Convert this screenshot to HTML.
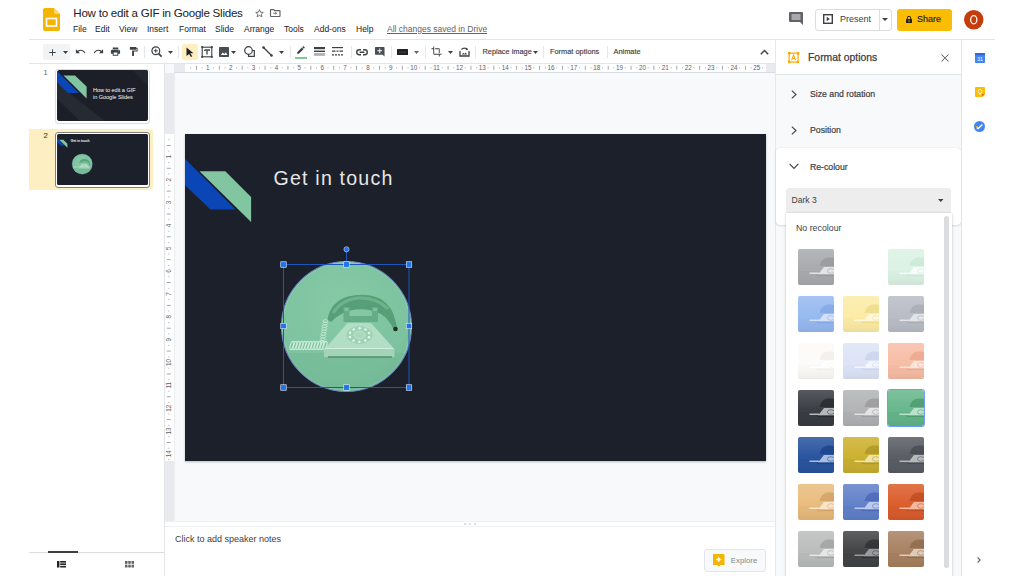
<!DOCTYPE html>
<html><head><meta charset="utf-8">
<style>
*{box-sizing:border-box;margin:0;padding:0}
html,body{width:1024px;height:576px;overflow:hidden;background:#fff;font-family:"Liberation Sans",sans-serif;color:#3c4043}
.a{position:absolute}
.t{position:absolute;white-space:nowrap;line-height:1}
svg{position:absolute;overflow:visible}
</style></head><body>

<!-- ============ HEADER ============ -->
<svg class="a" style="left:43px;top:8px" width="17" height="23" viewBox="0 0 17 23">
  <path d="M2 0H11L17 6V21A2 2 0 0 1 15 23H2A2 2 0 0 1 0 21V2A2 2 0 0 1 2 0Z" fill="#f4b400"/>
  <path d="M11 0L17 6H13A2 2 0 0 1 11 4Z" fill="#fad87a"/>
  <rect x="3.5" y="10.5" width="10" height="7.5" fill="none" stroke="#fff" stroke-width="1.6"/>
</svg>
<div class="t" style="left:73.3px;top:7.4px;font-size:11.6px;letter-spacing:-0.25px;color:#202124">How to edit a GIF in Google Slides</div>
<!-- star -->
<svg style="left:254.8px;top:9.3px" width="9" height="8.5" viewBox="0 0 24 23"><path d="M12 1.8l2.9 6.9 7.3.6-5.5 4.8 1.7 7.2L12 17.4l-6.4 3.9 1.7-7.2-5.5-4.8 7.3-.6z" fill="none" stroke="#5f6368" stroke-width="2.4" stroke-linejoin="round"/></svg>
<!-- folder -->
<svg style="left:270.3px;top:9.2px" width="10.5" height="8" viewBox="0 0 21 16"><path d="M2 1.2H7.5L9.5 3.2H19A1 1 0 0 1 20 4.2V14A1 1 0 0 1 19 15H2A1 1 0 0 1 1 14V2.2A1 1 0 0 1 2 1.2Z" fill="none" stroke="#5f6368" stroke-width="2.3"/><path d="M6.5 8.5H13M10.5 6L13 8.5L10.5 11" fill="none" stroke="#5f6368" stroke-width="1.8"/></svg>

<div class="t" style="top:25px;font-size:8.5px;color:#202124">
<span class="t" style="left:73px">File</span><span class="t" style="left:95px">Edit</span><span class="t" style="left:119px">View</span><span class="t" style="left:147px">Insert</span><span class="t" style="left:179px">Format</span><span class="t" style="left:215px">Slide</span><span class="t" style="left:244px">Arrange</span><span class="t" style="left:284px">Tools</span><span class="t" style="left:314px">Add-ons</span><span class="t" style="left:356px">Help</span>
<span class="t" style="left:387px;color:#5f6368;text-decoration:underline">All changes saved in Drive</span>
</div>

<!-- right header -->
<svg style="left:789px;top:12px" width="14" height="13" viewBox="0 0 14 13"><path d="M1 0H13A1 1 0 0 1 14 1V13L11 10H1A1 1 0 0 1 0 9V1A1 1 0 0 1 1 0Z" fill="#5f6368"/><path d="M2.5 3H11.5M2.5 5H11.5M2.5 7H11.5" stroke="#fff" stroke-width="0.9"/></svg>
<div class="a" style="left:815px;top:8.5px;width:77px;height:22px;border:1px solid #dadce0;border-radius:3px"></div>
<div class="a" style="left:879px;top:9px;width:1px;height:21px;background:#dadce0"></div>
<svg style="left:823px;top:14px" width="10" height="10" viewBox="0 0 10 10"><rect x="0.7" y="0.7" width="8.6" height="8.6" fill="none" stroke="#3c4043" stroke-width="1.4"/><path d="M3.7 2.8L6.8 5L3.7 7.2Z" fill="#3c4043"/></svg>
<div class="t" style="left:840px;top:15px;font-size:9px;color:#3c4043">Present</div>
<svg style="left:882px;top:18px" width="6" height="3" viewBox="0 0 6 3"><path d="M0 0H6L3 3Z" fill="#3c4043"/></svg>
<div class="a" style="left:897px;top:8.5px;width:54.5px;height:22px;background:#fbbc04;border-radius:3px"></div>
<svg style="left:906px;top:15.8px" width="6" height="7" viewBox="0 0 6 7"><path d="M1.3 3.2V2A1.7 1.7 0 0 1 4.7 2V3.2" fill="none" stroke="#202124" stroke-width="1"/><rect x="0" y="3" width="6" height="4" rx="0.6" fill="#202124"/><circle cx="3" cy="5" r="0.7" fill="#fbbc04"/></svg>
<div class="t" style="left:917px;top:15px;font-size:9px;color:#202124;-webkit-text-stroke:0.15px #202124">Share</div>
<svg style="left:964px;top:9.9px" width="19.5" height="19.5" viewBox="0 0 19.5 19.5"><circle cx="9.75" cy="9.75" r="9.75" fill="#c53d0d"/><ellipse cx="9.75" cy="9.75" rx="3.1" ry="4.1" fill="none" stroke="#fff" stroke-width="1.25"/></svg>

<!-- header bottom line -->
<div class="a" style="left:29px;top:39px;width:966px;height:1px;background:#e3e5e8"></div>


<!-- ============ TOOLBAR ============ -->
<div class="a" style="left:29px;top:63px;width:746px;height:1px;background:#e3e5e8"></div>
<div class="a" style="left:43px;top:44px;width:27px;height:16px;background:#f1f3f4;border-radius:2px"></div>
<svg style="left:46.5px;top:46.5px" width="11" height="11" viewBox="0 0 24 24"><path d="M19 13h-6v6h-2v-6H5v-2h6V5h2v6h6v2z" fill="#3c4043"/></svg>
<svg style="left:62.5px;top:51px" width="5" height="3" viewBox="0 0 5 3"><path d="M0 0H5L2.5 3Z" fill="#3c4043"/></svg>
<svg style="left:74.5px;top:46px" width="11" height="11" viewBox="0 0 24 24"><path d="M12.5 8c-2.65 0-5.05.99-6.9 2.6L2 7v9h9l-3.62-3.62c1.39-1.16 3.16-1.88 5.12-1.88 3.54 0 6.55 2.31 7.6 5.5l2.370-.78C21.08 11.03 17.15 8 12.5 8z" fill="#3c4043"/></svg>
<svg style="left:92.5px;top:46px" width="11" height="11" viewBox="0 0 24 24"><path d="M18.4 10.6C16.55 8.99 14.15 8 11.5 8c-4.650 0-8.58 3.03-9.96 7.22L3.9 16c1.05-3.19 4.05-5.5 7.6-5.5 1.95 0 3.73.72 5.12 1.88L13 16h9V7l-3.6 3.6z" fill="#3c4043"/></svg>
<svg style="left:109.5px;top:46px" width="11" height="11" viewBox="0 0 24 24"><path d="M19 8H5c-1.66 0-3 1.34-3 3v6h4v4h12v-4h4v-6c0-1.66-1.34-3-3-3zm-3 11H8v-5h8v5zm3-7c-.55 0-1-.45-1-1s.45-1 1-1 1 .45 1 1-.45 1-1 1zm-1-9H6v4h12V3z" fill="#3c4043"/></svg>
<svg style="left:127.5px;top:46px" width="11" height="11" viewBox="0 0 24 24"><path d="M18 4V3c0-.55-.45-1-1-1H5c-.55 0-1 .45-1 1v4c0 .55.45 1 1 1h12c.55 0 1-.45 1-1V6h1v4H9v11c0 .55.45 1 1 1h2c.55 0 1-.45 1-1v-9h8V4h-3z" fill="#3c4043"/></svg>
<div class="a" style="left:144px;top:46px;width:1px;height:12px;background:#e5e7ea"></div>
<svg style="left:150px;top:45px" width="13" height="13" viewBox="0 0 13 13"><circle cx="5.8" cy="5.8" r="3.9" fill="none" stroke="#3c4043" stroke-width="1.2"/><path d="M8.6 8.6L11.6 11.6" stroke="#3c4043" stroke-width="1.6"/><path d="M5.8 3.8V7.8M3.8 5.8H7.8" stroke="#3c4043" stroke-width="1"/></svg>
<svg style="left:167.5px;top:51px" width="5" height="3" viewBox="0 0 5 3"><path d="M0 0H5L2.5 3Z" fill="#3c4043"/></svg>
<div class="a" style="left:178px;top:46px;width:1px;height:12px;background:#e5e7ea"></div>
<div class="a" style="left:181.5px;top:43.5px;width:16px;height:16px;background:#feefc3;border-radius:2px"></div>
<svg style="left:185px;top:46.5px" width="10" height="10" viewBox="0 0 10 10"><path d="M1.5 0.5L8.5 6.3H5.3L7.2 9.3L5.9 10L4.1 7L1.5 9Z" fill="#202124"/></svg>
<svg style="left:201px;top:46px" width="12" height="12" viewBox="0 0 12 12"><rect x="1.2" y="1.2" width="9.6" height="9.6" fill="none" stroke="#3c4043" stroke-width="1.1"/><circle cx="1.2" cy="1.2" r="1.1" fill="#3c4043"/><circle cx="10.8" cy="1.2" r="1.1" fill="#3c4043"/><circle cx="1.2" cy="10.8" r="1.1" fill="#3c4043"/><circle cx="10.8" cy="10.8" r="1.1" fill="#3c4043"/><path d="M3.8 3.8H8.2V5M6 3.8V8.4M3.8 3.8V5" fill="none" stroke="#3c4043" stroke-width="1.3"/></svg>
<svg style="left:219px;top:46.5px" width="10" height="10" viewBox="0 0 10 10"><rect x="0" y="0" width="10" height="10" rx="0.8" fill="#4a4e52"/><path d="M1.8 8L3.8 5.4L5.3 7.1L6.8 5.2L8.4 8Z" fill="#fff"/></svg>
<svg style="left:231.2px;top:51px" width="5" height="3" viewBox="0 0 5 3"><path d="M0 0H5L2.5 3Z" fill="#3c4043"/></svg>
<svg style="left:243.5px;top:46px" width="11" height="11" viewBox="0 0 11 11"><circle cx="4.5" cy="4.5" r="3.8" fill="none" stroke="#3c4043" stroke-width="1.2"/><path d="M4.5 8.3V10.3H10.3V4.5H8.3" fill="none" stroke="#3c4043" stroke-width="1.2"/></svg>
<svg style="left:262px;top:46px" width="11" height="11" viewBox="0 0 11 11"><path d="M1.5 1.5L9.5 9.5" stroke="#3c4043" stroke-width="1.3"/><circle cx="1.5" cy="1.5" r="1.3" fill="#3c4043"/><circle cx="9.5" cy="9.5" r="1.3" fill="#3c4043"/></svg>
<svg style="left:279px;top:51px" width="5" height="3" viewBox="0 0 5 3"><path d="M0 0H5L2.5 3Z" fill="#3c4043"/></svg>
<div class="a" style="left:289.5px;top:46px;width:1px;height:12px;background:#e5e7ea"></div>
<svg style="left:296px;top:45px" width="10" height="10" viewBox="0 0 24 24"><path d="M3 17.25V21h3.75L17.81 9.940l-3.75-3.75L3 17.25zM20.71 7.04c.39-.39.39-1.02 0-1.41l-2.34-2.34c-.39-.39-1.02-.39-1.41 0l-1.83 1.830 3.75 3.75 1.83-1.830z" fill="#3c4043"/></svg>
<div class="a" style="left:295px;top:56.5px;width:12px;height:2px;background:#81c995"></div>
<svg style="left:314px;top:47px" width="11" height="9" viewBox="0 0 11 9"><rect x="0" y="0" width="11" height="2.2" fill="#3c4043"/><rect x="0" y="3.6" width="11" height="1.4" fill="#3c4043"/><rect x="0" y="6.6" width="11" height="0.8" fill="#3c4043"/><rect x="0" y="8.2" width="11" height="0.7" fill="#9aa0a6"/></svg>
<svg style="left:332px;top:47px" width="11" height="9" viewBox="0 0 11 9"><rect x="0" y="0" width="11" height="1.2" fill="#3c4043"/><path d="M0 4.2H3.5M4.5 4.2H6.5M7.5 4.2H11" stroke="#3c4043" stroke-width="1.2"/><path d="M0 7.8H2M3 7.8H5M6 7.8H8M9 7.8H11" stroke="#3c4043" stroke-width="1.2"/></svg>
<div class="a" style="left:350.5px;top:46px;width:1px;height:12px;background:#e5e7ea"></div>
<svg style="left:356px;top:48.5px" width="12" height="6.5" viewBox="0 0 12 6.5"><path d="M5 0.8H3.2A2.45 2.45 0 0 0 3.2 5.7H5M7 0.8H8.8A2.45 2.45 0 0 1 8.8 5.7H7M3.6 3.25H8.4" fill="none" stroke="#3c4043" stroke-width="1.4"/></svg>
<svg style="left:373.5px;top:46px" width="11.5" height="11.5" viewBox="0 0 24 24"><path d="M21.99 4c0-1.1-.89-2-1.99-2H4c-1.1 0-2 .9-2 2v12c0 1.1.9 2 2 2h14l4 4-.01-18zM17 11h-4v4h-2v-4H7V9h4V5h2v4h4v2z" fill="#4a4d51"/></svg>
<div class="a" style="left:390.5px;top:46px;width:1px;height:12px;background:#e5e7ea"></div>
<svg style="left:397px;top:49px" width="11" height="6" viewBox="0 0 11 6"><rect x="0" y="0" width="11" height="6" rx="0.5" fill="#202124"/><path d="M2 3.2H9" stroke="#5f6368" stroke-width="0.8" stroke-dasharray="1 0.6"/></svg>
<svg style="left:413.5px;top:51px" width="5" height="3" viewBox="0 0 5 3"><path d="M0 0H5L2.5 3Z" fill="#5f6368"/></svg>
<div class="a" style="left:424.5px;top:46px;width:1px;height:12px;background:#e5e7ea"></div>
<svg style="left:430.5px;top:46px" width="11" height="11" viewBox="0 0 24 24"><path d="M17 15h2V7c0-1.1-.9-2-2-2H9v2h8v8zM7 17V1H5v4H1v2h4v10c0 1.1.9 2 2 2h10v4h2v-4h4v-2H7z" fill="#3c4043"/></svg>
<svg style="left:447.5px;top:51px" width="5" height="3" viewBox="0 0 5 3"><path d="M0 0H5L2.5 3Z" fill="#3c4043"/></svg>
<svg style="left:458.5px;top:46px" width="11" height="11" viewBox="0 0 11 11"><path d="M1 5V10H10V5" fill="none" stroke="#3c4043" stroke-width="1.3"/><path d="M2.5 3.5A4 4 0 0 1 8.5 3.5" fill="none" stroke="#3c4043" stroke-width="1.2"/><path d="M7.5 1.5L9 3.8L6.6 4.2Z" fill="#3c4043"/><path d="M2.8 8.6L4.3 6.8L5.4 7.9L6.6 6.4L8.2 8.6Z" fill="#3c4043"/></svg>
<div class="a" style="left:475px;top:46px;width:1px;height:12px;background:#e5e7ea"></div>
<div class="t" style="left:482.5px;top:47.5px;font-size:7.4px;color:#3c4043;-webkit-text-stroke:0.15px #3c4043">Replace image</div>
<svg style="left:533px;top:51px" width="5" height="3" viewBox="0 0 5 3"><path d="M0 0H5L2.5 3Z" fill="#3c4043"/></svg>
<div class="a" style="left:543px;top:46px;width:1px;height:12px;background:#e5e7ea"></div>
<div class="t" style="left:550px;top:47.5px;font-size:7.4px;color:#3c4043;-webkit-text-stroke:0.15px #3c4043">Format options</div>
<div class="a" style="left:607px;top:46px;width:1px;height:12px;background:#e5e7ea"></div>
<div class="t" style="left:613.5px;top:47.5px;font-size:7.4px;color:#3c4043;-webkit-text-stroke:0.15px #3c4043">Animate</div>
<svg style="left:760px;top:48.5px" width="9" height="6" viewBox="0 0 9 6"><path d="M0.8 5.2L4.5 1.5L8.2 5.2" fill="none" stroke="#3c4043" stroke-width="1.4"/></svg>


<!-- ============ LEFT FILMSTRIP ============ -->
<div class="a" style="left:164px;top:64px;width:1px;height:512px;background:#e3e5e8"></div>
<div class="t" style="left:43.5px;top:69px;font-size:7.5px;color:#5f6368">1</div>
<div class="a" style="left:55px;top:68.5px;width:94.5px;height:55px;border:1px solid #dadce0;border-radius:3px;background:#fff"></div>
<svg style="left:57px;top:70.4px;overflow:hidden;border-radius:2px" width="91" height="51.1" viewBox="0 0 91 51.1">
  <rect width="91" height="51.1" rx="1.8" fill="#1c1f28"/>
  <path d="M0 12.9L48 51.1H23L0 29Z" fill="#262a32"/>
  <path d="M74.8 0H91V16Z" fill="#22262f"/>
  <path d="M0 1.1L22 23.1H10.8L0 12.4Z" fill="#0a46b5"/>
  <path d="M6.5 5.4H18L29.6 16.6V28.5Z" fill="#81c5a1"/>
  <text x="36" y="22" font-family="Liberation Sans" font-size="5.6" letter-spacing="-0.05" fill="#f4f4f4">How to edit a GIF</text>
  <text x="36" y="28.7" font-family="Liberation Sans" font-size="5.6" letter-spacing="-0.05" fill="#f4f4f4">in Google Slides</text>
</svg>
<div class="a" style="left:29px;top:128.5px;width:124px;height:61.5px;background:#feefc3;border-radius:0 3px 3px 0"></div>
<div class="t" style="left:43.5px;top:131.5px;font-size:7.8px;color:#3c4043;-webkit-text-stroke:0.1px #3c4043">2</div>
<div class="a" style="left:54.5px;top:131.5px;width:95px;height:56px;border:1.2px solid #7c7f84;border-radius:3px;background:#fff"></div>
<svg style="left:57px;top:133.9px;overflow:hidden;border-radius:1.5px" width="91" height="51.2" viewBox="0 0 581 327">
  <rect width="581" height="327" fill="#1c202b"/>
  <path d="M0 24.75L50.5 75.5H25.5L0 51.3Z" fill="#0a46b5"/>
  <path d="M14.5 37.25H40.3L66.1 63V88Z" fill="#81c5a1"/>
  <text x="88" y="48" font-family="Liberation Sans" font-size="20" letter-spacing="1" fill="#f2f2f2" stroke="#f2f2f2" stroke-width="0.7">Get in touch</text>
  <use href="#phoneg" transform="translate(95.5 126.5)"/>
</svg>
<div class="a" style="left:29px;top:552px;width:135px;height:1px;background:#dadce0"></div>
<div class="a" style="left:48px;top:551px;width:29.5px;height:2px;background:#3c4043"></div>
<svg style="left:57px;top:561px" width="9" height="6.5" viewBox="0 0 9 6.5"><rect x="0" y="0" width="2.4" height="6.5" fill="#202124"/><rect x="3.2" y="0" width="5.8" height="1.6" fill="#202124"/><rect x="3.2" y="2.4" width="5.8" height="1.6" fill="#202124"/><rect x="3.2" y="4.9" width="5.8" height="1.6" fill="#202124"/></svg>
<svg style="left:124.5px;top:561px" width="9" height="6.5" viewBox="0 0 9 6.5"><g fill="#5f6368"><rect x="0" y="0" width="2.5" height="2.8"/><rect x="3.25" y="0" width="2.5" height="2.8"/><rect x="6.5" y="0" width="2.5" height="2.8"/><rect x="0" y="3.7" width="2.5" height="2.8"/><rect x="3.25" y="3.7" width="2.5" height="2.8"/><rect x="6.5" y="3.7" width="2.5" height="2.8"/></g></svg>

<!-- ============ CANVAS ============ -->
<div class="a" style="left:165px;top:72px;width:610px;height:449.5px;background:#f8f9fa"></div>
<div class="a" style="left:165px;top:63.5px;width:610px;height:9px;background:#fff;border-bottom:1px solid #dadce0"></div>
<div class="a" style="left:165px;top:63.5px;width:9px;height:9px;background:#f8f9fa"></div>
<div class="a" style="left:174px;top:63.5px;width:11px;height:8.5px;background:#e8eaed"></div>
<div class="a" style="left:765.5px;top:63.5px;width:9.5px;height:8.5px;background:#e8eaed"></div>
<div class="a" style="left:165px;top:72.5px;width:9px;height:449px;background:#e8eaed"></div>
<div class="a" style="left:165px;top:134px;width:9px;height:326.5px;background:#fff"></div>
<div class="a" style="left:174px;top:72.5px;width:1px;height:449px;background:#eceef0"></div>
<svg style="left:0;top:63px" width="1024" height="10" font-family="Liberation Sans" font-size="6.3" fill="#5f6368"><rect x="190.27" y="4.3" width="0.9" height="1" fill="#9aa0a6"/><rect x="195.99" y="2.8" width="0.9" height="4" fill="#9aa0a6"/><rect x="201.71" y="4.3" width="0.9" height="1" fill="#9aa0a6"/><text x="207.87" y="7.3" text-anchor="middle">1</text><rect x="213.14" y="4.3" width="0.9" height="1" fill="#9aa0a6"/><rect x="218.86" y="2.8" width="0.9" height="4" fill="#9aa0a6"/><rect x="224.58" y="4.3" width="0.9" height="1" fill="#9aa0a6"/><text x="230.75" y="7.3" text-anchor="middle">2</text><rect x="236.02" y="4.3" width="0.9" height="1" fill="#9aa0a6"/><rect x="241.74" y="2.8" width="0.9" height="4" fill="#9aa0a6"/><rect x="247.45" y="4.3" width="0.9" height="1" fill="#9aa0a6"/><text x="253.62" y="7.3" text-anchor="middle">3</text><rect x="258.89" y="4.3" width="0.9" height="1" fill="#9aa0a6"/><rect x="264.61" y="2.8" width="0.9" height="4" fill="#9aa0a6"/><rect x="270.33" y="4.3" width="0.9" height="1" fill="#9aa0a6"/><text x="276.50" y="7.3" text-anchor="middle">4</text><rect x="281.76" y="4.3" width="0.9" height="1" fill="#9aa0a6"/><rect x="287.48" y="2.8" width="0.9" height="4" fill="#9aa0a6"/><rect x="293.20" y="4.3" width="0.9" height="1" fill="#9aa0a6"/><text x="299.37" y="7.3" text-anchor="middle">5</text><rect x="304.64" y="4.3" width="0.9" height="1" fill="#9aa0a6"/><rect x="310.36" y="2.8" width="0.9" height="4" fill="#9aa0a6"/><rect x="316.08" y="4.3" width="0.9" height="1" fill="#9aa0a6"/><text x="322.24" y="7.3" text-anchor="middle">6</text><rect x="327.51" y="4.3" width="0.9" height="1" fill="#9aa0a6"/><rect x="333.23" y="2.8" width="0.9" height="4" fill="#9aa0a6"/><rect x="338.95" y="4.3" width="0.9" height="1" fill="#9aa0a6"/><text x="345.12" y="7.3" text-anchor="middle">7</text><rect x="350.39" y="4.3" width="0.9" height="1" fill="#9aa0a6"/><rect x="356.11" y="2.8" width="0.9" height="4" fill="#9aa0a6"/><rect x="361.82" y="4.3" width="0.9" height="1" fill="#9aa0a6"/><text x="367.99" y="7.3" text-anchor="middle">8</text><rect x="373.26" y="4.3" width="0.9" height="1" fill="#9aa0a6"/><rect x="378.98" y="2.8" width="0.9" height="4" fill="#9aa0a6"/><rect x="384.70" y="4.3" width="0.9" height="1" fill="#9aa0a6"/><text x="390.87" y="7.3" text-anchor="middle">9</text><rect x="396.13" y="4.3" width="0.9" height="1" fill="#9aa0a6"/><rect x="401.85" y="2.8" width="0.9" height="4" fill="#9aa0a6"/><rect x="407.57" y="4.3" width="0.9" height="1" fill="#9aa0a6"/><text x="413.74" y="7.3" text-anchor="middle">10</text><rect x="419.01" y="4.3" width="0.9" height="1" fill="#9aa0a6"/><rect x="424.73" y="2.8" width="0.9" height="4" fill="#9aa0a6"/><rect x="430.45" y="4.3" width="0.9" height="1" fill="#9aa0a6"/><text x="436.61" y="7.3" text-anchor="middle">11</text><rect x="441.88" y="4.3" width="0.9" height="1" fill="#9aa0a6"/><rect x="447.60" y="2.8" width="0.9" height="4" fill="#9aa0a6"/><rect x="453.32" y="4.3" width="0.9" height="1" fill="#9aa0a6"/><text x="459.49" y="7.3" text-anchor="middle">12</text><rect x="464.76" y="4.3" width="0.9" height="1" fill="#9aa0a6"/><rect x="470.48" y="2.8" width="0.9" height="4" fill="#9aa0a6"/><rect x="476.19" y="4.3" width="0.9" height="1" fill="#9aa0a6"/><text x="482.36" y="7.3" text-anchor="middle">13</text><rect x="487.63" y="4.3" width="0.9" height="1" fill="#9aa0a6"/><rect x="493.35" y="2.8" width="0.9" height="4" fill="#9aa0a6"/><rect x="499.07" y="4.3" width="0.9" height="1" fill="#9aa0a6"/><text x="505.24" y="7.3" text-anchor="middle">14</text><rect x="510.50" y="4.3" width="0.9" height="1" fill="#9aa0a6"/><rect x="516.22" y="2.8" width="0.9" height="4" fill="#9aa0a6"/><rect x="521.94" y="4.3" width="0.9" height="1" fill="#9aa0a6"/><text x="528.11" y="7.3" text-anchor="middle">15</text><rect x="533.38" y="4.3" width="0.9" height="1" fill="#9aa0a6"/><rect x="539.10" y="2.8" width="0.9" height="4" fill="#9aa0a6"/><rect x="544.82" y="4.3" width="0.9" height="1" fill="#9aa0a6"/><text x="550.98" y="7.3" text-anchor="middle">16</text><rect x="556.25" y="4.3" width="0.9" height="1" fill="#9aa0a6"/><rect x="561.97" y="2.8" width="0.9" height="4" fill="#9aa0a6"/><rect x="567.69" y="4.3" width="0.9" height="1" fill="#9aa0a6"/><text x="573.86" y="7.3" text-anchor="middle">17</text><rect x="579.13" y="4.3" width="0.9" height="1" fill="#9aa0a6"/><rect x="584.85" y="2.8" width="0.9" height="4" fill="#9aa0a6"/><rect x="590.56" y="4.3" width="0.9" height="1" fill="#9aa0a6"/><text x="596.73" y="7.3" text-anchor="middle">18</text><rect x="602.00" y="4.3" width="0.9" height="1" fill="#9aa0a6"/><rect x="607.72" y="2.8" width="0.9" height="4" fill="#9aa0a6"/><rect x="613.44" y="4.3" width="0.9" height="1" fill="#9aa0a6"/><text x="619.61" y="7.3" text-anchor="middle">19</text><rect x="624.87" y="4.3" width="0.9" height="1" fill="#9aa0a6"/><rect x="630.59" y="2.8" width="0.9" height="4" fill="#9aa0a6"/><rect x="636.31" y="4.3" width="0.9" height="1" fill="#9aa0a6"/><text x="642.48" y="7.3" text-anchor="middle">20</text><rect x="647.75" y="4.3" width="0.9" height="1" fill="#9aa0a6"/><rect x="653.47" y="2.8" width="0.9" height="4" fill="#9aa0a6"/><rect x="659.19" y="4.3" width="0.9" height="1" fill="#9aa0a6"/><text x="665.35" y="7.3" text-anchor="middle">21</text><rect x="670.62" y="4.3" width="0.9" height="1" fill="#9aa0a6"/><rect x="676.34" y="2.8" width="0.9" height="4" fill="#9aa0a6"/><rect x="682.06" y="4.3" width="0.9" height="1" fill="#9aa0a6"/><text x="688.23" y="7.3" text-anchor="middle">22</text><rect x="693.50" y="4.3" width="0.9" height="1" fill="#9aa0a6"/><rect x="699.22" y="2.8" width="0.9" height="4" fill="#9aa0a6"/><rect x="704.93" y="4.3" width="0.9" height="1" fill="#9aa0a6"/><text x="711.10" y="7.3" text-anchor="middle">23</text><rect x="716.37" y="4.3" width="0.9" height="1" fill="#9aa0a6"/><rect x="722.09" y="2.8" width="0.9" height="4" fill="#9aa0a6"/><rect x="727.81" y="4.3" width="0.9" height="1" fill="#9aa0a6"/><text x="733.98" y="7.3" text-anchor="middle">24</text><rect x="739.24" y="4.3" width="0.9" height="1" fill="#9aa0a6"/><rect x="744.96" y="2.8" width="0.9" height="4" fill="#9aa0a6"/><rect x="750.68" y="4.3" width="0.9" height="1" fill="#9aa0a6"/><text x="756.85" y="7.3" text-anchor="middle">25</text><rect x="762.12" y="4.3" width="0.9" height="1" fill="#9aa0a6"/></svg>
<svg style="left:164px;top:0" width="10" height="576" font-family="Liberation Sans" font-size="6.3" fill="#5f6368"><rect x="4.3" y="139.26" width="1" height="0.9" fill="#9aa0a6"/><rect x="2.8" y="144.97" width="4" height="0.9" fill="#9aa0a6"/><rect x="4.3" y="150.69" width="1" height="0.9" fill="#9aa0a6"/><text transform="translate(7.2 156.85) rotate(-90)" text-anchor="middle">1</text><rect x="4.3" y="162.11" width="1" height="0.9" fill="#9aa0a6"/><rect x="2.8" y="167.82" width="4" height="0.9" fill="#9aa0a6"/><rect x="4.3" y="173.53" width="1" height="0.9" fill="#9aa0a6"/><text transform="translate(7.2 179.70) rotate(-90)" text-anchor="middle">2</text><rect x="4.3" y="184.96" width="1" height="0.9" fill="#9aa0a6"/><rect x="2.8" y="190.67" width="4" height="0.9" fill="#9aa0a6"/><rect x="4.3" y="196.38" width="1" height="0.9" fill="#9aa0a6"/><text transform="translate(7.2 202.54) rotate(-90)" text-anchor="middle">3</text><rect x="4.3" y="207.81" width="1" height="0.9" fill="#9aa0a6"/><rect x="2.8" y="213.52" width="4" height="0.9" fill="#9aa0a6"/><rect x="4.3" y="219.23" width="1" height="0.9" fill="#9aa0a6"/><text transform="translate(7.2 225.39) rotate(-90)" text-anchor="middle">4</text><rect x="4.3" y="230.65" width="1" height="0.9" fill="#9aa0a6"/><rect x="2.8" y="236.37" width="4" height="0.9" fill="#9aa0a6"/><rect x="4.3" y="242.08" width="1" height="0.9" fill="#9aa0a6"/><text transform="translate(7.2 248.24) rotate(-90)" text-anchor="middle">5</text><rect x="4.3" y="253.50" width="1" height="0.9" fill="#9aa0a6"/><rect x="2.8" y="259.21" width="4" height="0.9" fill="#9aa0a6"/><rect x="4.3" y="264.93" width="1" height="0.9" fill="#9aa0a6"/><text transform="translate(7.2 271.09) rotate(-90)" text-anchor="middle">6</text><rect x="4.3" y="276.35" width="1" height="0.9" fill="#9aa0a6"/><rect x="2.8" y="282.06" width="4" height="0.9" fill="#9aa0a6"/><rect x="4.3" y="287.77" width="1" height="0.9" fill="#9aa0a6"/><text transform="translate(7.2 293.94) rotate(-90)" text-anchor="middle">7</text><rect x="4.3" y="299.20" width="1" height="0.9" fill="#9aa0a6"/><rect x="2.8" y="304.91" width="4" height="0.9" fill="#9aa0a6"/><rect x="4.3" y="310.62" width="1" height="0.9" fill="#9aa0a6"/><text transform="translate(7.2 316.79) rotate(-90)" text-anchor="middle">8</text><rect x="4.3" y="322.05" width="1" height="0.9" fill="#9aa0a6"/><rect x="2.8" y="327.76" width="4" height="0.9" fill="#9aa0a6"/><rect x="4.3" y="333.47" width="1" height="0.9" fill="#9aa0a6"/><text transform="translate(7.2 339.63) rotate(-90)" text-anchor="middle">9</text><rect x="4.3" y="344.90" width="1" height="0.9" fill="#9aa0a6"/><rect x="2.8" y="350.61" width="4" height="0.9" fill="#9aa0a6"/><rect x="4.3" y="356.32" width="1" height="0.9" fill="#9aa0a6"/><text transform="translate(7.2 362.48) rotate(-90)" text-anchor="middle">10</text><rect x="4.3" y="367.74" width="1" height="0.9" fill="#9aa0a6"/><rect x="2.8" y="373.46" width="4" height="0.9" fill="#9aa0a6"/><rect x="4.3" y="379.17" width="1" height="0.9" fill="#9aa0a6"/><text transform="translate(7.2 385.33) rotate(-90)" text-anchor="middle">11</text><rect x="4.3" y="390.59" width="1" height="0.9" fill="#9aa0a6"/><rect x="2.8" y="396.30" width="4" height="0.9" fill="#9aa0a6"/><rect x="4.3" y="402.02" width="1" height="0.9" fill="#9aa0a6"/><text transform="translate(7.2 408.18) rotate(-90)" text-anchor="middle">12</text><rect x="4.3" y="413.44" width="1" height="0.9" fill="#9aa0a6"/><rect x="2.8" y="419.15" width="4" height="0.9" fill="#9aa0a6"/><rect x="4.3" y="424.86" width="1" height="0.9" fill="#9aa0a6"/><text transform="translate(7.2 431.03) rotate(-90)" text-anchor="middle">13</text><rect x="4.3" y="436.29" width="1" height="0.9" fill="#9aa0a6"/><rect x="2.8" y="442.00" width="4" height="0.9" fill="#9aa0a6"/><rect x="4.3" y="447.71" width="1" height="0.9" fill="#9aa0a6"/><text transform="translate(7.2 453.87) rotate(-90)" text-anchor="middle">14</text><rect x="4.3" y="459.14" width="1" height="0.9" fill="#9aa0a6"/></svg>
<div class="a" style="left:165px;top:521px;width:610px;height:1px;background:#eef0f2"></div>
<div class="a" style="left:165px;top:526px;width:610px;height:1px;background:#f0f1f3"></div>
<div class="a" style="left:464.3px;top:523px;width:2px;height:2px;border-radius:1px;background:#d3d5d8"></div>
<div class="a" style="left:469.3px;top:523px;width:2px;height:2px;border-radius:1px;background:#d3d5d8"></div>
<div class="a" style="left:474.3px;top:523px;width:2px;height:2px;border-radius:1px;background:#d3d5d8"></div>
<div class="t" style="left:175px;top:534.5px;font-size:9px;color:#3c4043">Click to add speaker notes</div>
<div class="a" style="left:704px;top:549px;width:61.5px;height:23px;border:1px solid #e3e5e8;border-radius:3px;background:#f8f9fa"></div>
<svg style="left:712.5px;top:554px" width="11.5" height="13" viewBox="0 0 11.5 13"><path d="M1 0H10.5A1 1 0 0 1 11.5 1V11H7.3L5.75 12.8L4.2 11H0V1A1 1 0 0 1 1 0Z" fill="#f4b400"/><path d="M5.75 2.2Q6.2 5 9.3 5.5Q6.2 6 5.75 8.8Q5.3 6 2.2 5.5Q5.3 5 5.75 2.2Z" fill="#fff"/></svg>
<div class="t" style="left:730.8px;top:556.8px;font-size:7.8px;color:#80868b">Explore</div>

<!-- ============ SLIDE ============ -->
<div class="a" style="left:185px;top:134px;width:581px;height:326.5px;background:#1c202b;box-shadow:0 0.5px 2px rgba(60,64,67,.35)"></div>
<svg style="left:185px;top:134px" width="581" height="327" viewBox="0 0 581 327">
  <path d="M0 24.75L50.5 75.5H25.5L0 51.3Z" fill="#0a46b5"/>
  <path d="M14.5 37.25H40.3L66.1 63V88Z" fill="#81c5a1"/>
</svg>
<div class="t" style="left:273.5px;top:168.5px;font-size:19.6px;letter-spacing:1.2px;color:#e6e6e6">Get in touch</div>


<!-- phone image -->
<svg style="left:280.5px;top:260.5px" width="131" height="131" viewBox="0 0 131 131">
  <defs>
    <radialGradient id="bg" cx="0.45" cy="0.35" r="0.75">
      <stop offset="0" stop-color="#86c9a6"/>
      <stop offset="0.7" stop-color="#7dc39f"/>
      <stop offset="1" stop-color="#74ba96"/>
    </radialGradient>
    <clipPath id="cc"><circle cx="65.5" cy="65.5" r="64.5"/></clipPath>
  </defs>
<g id="phoneg">
  <circle cx="65.5" cy="65.5" r="65" fill="url(#bg)" stroke="#6f86c8" stroke-width="1.1"/><circle cx="65.5" cy="65.5" r="64" fill="none" stroke="#8fd0ae" stroke-width="0.8"/>
  <g clip-path="url(#cc)">
    <rect x="0" y="92" width="131" height="39" fill="#70b590" opacity="0.4"/>
    <ellipse cx="44.5" cy="60.0" rx="2.6" ry="1.3" fill="none" stroke="#c3e6d2" stroke-width="0.9"/><ellipse cx="44.1" cy="62.6" rx="2.6" ry="1.3" fill="none" stroke="#c3e6d2" stroke-width="0.9"/><ellipse cx="43.7" cy="65.2" rx="2.6" ry="1.3" fill="none" stroke="#c3e6d2" stroke-width="0.9"/><ellipse cx="43.3" cy="67.8" rx="2.6" ry="1.3" fill="none" stroke="#c3e6d2" stroke-width="0.9"/><ellipse cx="42.9" cy="70.4" rx="2.6" ry="1.3" fill="none" stroke="#c3e6d2" stroke-width="0.9"/><ellipse cx="42.5" cy="73.0" rx="2.6" ry="1.3" fill="none" stroke="#c3e6d2" stroke-width="0.9"/><ellipse cx="42.1" cy="75.6" rx="2.6" ry="1.3" fill="none" stroke="#c3e6d2" stroke-width="0.9"/><ellipse cx="41.7" cy="78.2" rx="2.6" ry="1.3" fill="none" stroke="#c3e6d2" stroke-width="0.9"/><ellipse cx="41.3" cy="80.8" rx="2.6" ry="1.3" fill="none" stroke="#c3e6d2" stroke-width="0.9"/>
    <ellipse cx="11.0" cy="84.5" rx="1.7" ry="4.3" transform="rotate(18 11.0 84.5)" fill="none" stroke="#cdebd9" stroke-width="1.1"/><ellipse cx="14.0" cy="84.5" rx="1.7" ry="4.3" transform="rotate(18 14.0 84.5)" fill="none" stroke="#cdebd9" stroke-width="1.1"/><ellipse cx="17.0" cy="84.5" rx="1.7" ry="4.3" transform="rotate(18 17.0 84.5)" fill="none" stroke="#cdebd9" stroke-width="1.1"/><ellipse cx="20.0" cy="84.5" rx="1.7" ry="4.3" transform="rotate(18 20.0 84.5)" fill="none" stroke="#cdebd9" stroke-width="1.1"/><ellipse cx="23.0" cy="84.5" rx="1.7" ry="4.3" transform="rotate(18 23.0 84.5)" fill="none" stroke="#cdebd9" stroke-width="1.1"/><ellipse cx="26.0" cy="84.5" rx="1.7" ry="4.3" transform="rotate(18 26.0 84.5)" fill="none" stroke="#cdebd9" stroke-width="1.1"/><ellipse cx="29.0" cy="84.5" rx="1.7" ry="4.3" transform="rotate(18 29.0 84.5)" fill="none" stroke="#cdebd9" stroke-width="1.1"/><ellipse cx="32.0" cy="84.5" rx="1.7" ry="4.3" transform="rotate(18 32.0 84.5)" fill="none" stroke="#cdebd9" stroke-width="1.1"/><ellipse cx="35.0" cy="84.5" rx="1.7" ry="4.3" transform="rotate(18 35.0 84.5)" fill="none" stroke="#cdebd9" stroke-width="1.1"/><ellipse cx="38.0" cy="84.5" rx="1.7" ry="4.3" transform="rotate(18 38.0 84.5)" fill="none" stroke="#cdebd9" stroke-width="1.1"/><ellipse cx="41.0" cy="84.5" rx="1.7" ry="4.3" transform="rotate(18 41.0 84.5)" fill="none" stroke="#cdebd9" stroke-width="1.1"/><ellipse cx="44.0" cy="84.5" rx="1.7" ry="4.3" transform="rotate(18 44.0 84.5)" fill="none" stroke="#cdebd9" stroke-width="1.1"/>
    <!-- body -->
    <path d="M66.5 62H90L112.5 87H44.5Z" fill="#b3dec6"/>
    <path d="M44.5 87H112.5L113 89H44Z" fill="#d2eddd"/>
    <rect x="43" y="88" width="70.5" height="8" fill="#a2d4b8"/>
    <path d="M47 96H111" stroke="#4f8f6c" stroke-width="1.4"/>
    <!-- dial -->
    <ellipse cx="78.5" cy="74" rx="13" ry="9" fill="#9dd2b4"/>
    <circle cx="88.05" cy="71.99" r="1.3" fill="#e3f4ea"/><circle cx="87.97" cy="76.19" r="1.3" fill="#e3f4ea"/><circle cx="84.26" cy="79.56" r="1.3" fill="#e3f4ea"/><circle cx="78.36" cy="80.80" r="1.3" fill="#e3f4ea"/><circle cx="72.51" cy="79.44" r="1.3" fill="#e3f4ea"/><circle cx="68.95" cy="76.01" r="1.3" fill="#e3f4ea"/><circle cx="69.03" cy="71.81" r="1.3" fill="#e3f4ea"/><circle cx="72.74" cy="68.44" r="1.3" fill="#e3f4ea"/><circle cx="78.64" cy="67.20" r="1.3" fill="#e3f4ea"/><circle cx="84.49" cy="68.56" r="1.3" fill="#e3f4ea"/>
    <ellipse cx="78.5" cy="74" rx="5.5" ry="3.6" fill="#a9d9bd" stroke="#c9ead7" stroke-width="0.8"/>
    <!-- banana -->
    <path d="M46.5 59 Q49 41 67 35.5 Q85 31 100 38 Q112 46 114.5 60 L116.5 68 L112.5 68.5 Q108 58 100 53 Q88 47 75 48.5 Q60 50 50 61Z" fill="#569f79"/>
    <path d="M52 52 Q60 39 77 37 Q96 36 107 48" fill="none" stroke="#6db48e" stroke-width="3"/>
    <!-- cradle -->
    <path d="M62.5 46H68.5V55H91V46H97V61H62.5Z" fill="#66ad87"/><path d="M63.5 47H67.5V50H63.5ZM92 47H96V50H92Z" fill="#7cc19b"/>
    <circle cx="114.5" cy="68" r="2.3" fill="#23302a"/>
  </g>
</g>
</svg>
<!-- selection -->
<svg style="left:0;top:0" width="1024" height="576">
  <rect x="283.5" y="264.5" width="125.5" height="123" fill="none" stroke="#1d56b8" stroke-width="1"/>
  <path d="M346.5 252V264.5" stroke="#1d56b8" stroke-width="1"/>
  <circle cx="346.5" cy="249.3" r="2.6" fill="#1f74ea" stroke="#e8f0fe" stroke-width="0.5"/>
  <g fill="#1f74ea" stroke="#e8f0fe" stroke-width="0.6"><rect x="280.75" y="261.75" width="5.5" height="5.5"/><rect x="343.75" y="261.75" width="5.5" height="5.5"/><rect x="406.25" y="261.75" width="5.5" height="5.5"/><rect x="280.75" y="323.25" width="5.5" height="5.5"/><rect x="406.25" y="323.25" width="5.5" height="5.5"/><rect x="280.75" y="384.75" width="5.5" height="5.5"/><rect x="343.75" y="384.75" width="5.5" height="5.5"/><rect x="406.25" y="384.75" width="5.5" height="5.5"/></g>
</svg>


<!-- ============ FORMAT PANEL ============ -->
<div class="a" style="left:775px;top:40px;width:186px;height:536px;background:#f8f9fa;border-left:1px solid #e6e8eb"></div>
<div class="a" style="left:776px;top:40px;width:185px;height:35px;background:#fff;border-bottom:1px solid #e3e5e8"></div>
<svg style="left:787.5px;top:51.8px" width="11.2" height="11.2" viewBox="0 0 12 12">
  <rect x="1.2" y="1.2" width="9.6" height="9.6" fill="#fff" stroke="#f9ab00" stroke-width="1.3"/>
  <rect x="0" y="0" width="2.6" height="2.6" fill="#f9ab00"/><rect x="9.4" y="0" width="2.6" height="2.6" fill="#f9ab00"/><rect x="0" y="9.4" width="2.6" height="2.6" fill="#f9ab00"/><rect x="9.4" y="9.4" width="2.6" height="2.6" fill="#f9ab00"/>
  <path d="M3.9 8.9L6 3.1L8.1 8.9M4.7 6.9H7.3" fill="none" stroke="#f9ab00" stroke-width="1.1"/>
</svg>
<div class="t" style="left:808px;top:53px;font-size:10.4px;color:#3c4043;-webkit-text-stroke:0.25px #3c4043">Format options</div>
<svg style="left:940.5px;top:53.5px" width="8" height="8" viewBox="0 0 8 8"><path d="M0.5 0.5L7.5 7.5M7.5 0.5L0.5 7.5" stroke="#5f6368" stroke-width="1.05"/></svg>

<svg style="left:791px;top:89.5px" width="6" height="9" viewBox="0 0 6 9"><path d="M0.8 0.6L5 4.5L0.8 8.4" fill="none" stroke="#3c4043" stroke-width="1.1"/></svg>
<div class="t" style="left:810px;top:90px;font-size:8.7px;color:#3c4043;-webkit-text-stroke:0.2px #3c4043">Size and rotation</div>
<svg style="left:791px;top:125.8px" width="6" height="9" viewBox="0 0 6 9"><path d="M0.8 0.6L5 4.5L0.8 8.4" fill="none" stroke="#3c4043" stroke-width="1.1"/></svg>
<div class="t" style="left:810px;top:126px;font-size:8.7px;color:#3c4043;-webkit-text-stroke:0.2px #3c4043">Position</div>

<div class="a" style="left:776px;top:148px;width:185px;height:77px;background:#fff;border-radius:4px;box-shadow:0 1px 2px rgba(60,64,67,.15),0 0 1px rgba(60,64,67,.2)"></div>
<svg style="left:788.5px;top:163px" width="10" height="6.5" viewBox="0 0 10 6.5"><path d="M0.6 0.8L5 5.5L9.4 0.8" fill="none" stroke="#3c4043" stroke-width="1.1"/></svg>
<div class="t" style="left:810px;top:163px;font-size:8.7px;color:#3c4043;-webkit-text-stroke:0.2px #3c4043">Re-colour</div>
<div class="a" style="left:786px;top:187.5px;width:165px;height:25px;background:#ededed;border-radius:3px 3px 0 0"></div>
<div class="t" style="left:791.5px;top:195.5px;font-size:8.6px;color:#3c4043">Dark 3</div>
<svg style="left:937.5px;top:199px" width="5.5" height="3" viewBox="0 0 5.5 3"><path d="M0 0H5.5L2.75 3Z" fill="#3c4043"/></svg>

<!-- dropdown menu -->
<div class="a" style="left:786px;top:213px;width:165.5px;height:380px;background:#fff;box-shadow:0 1px 3px rgba(0,0,0,.16),0 0 1.5px rgba(0,0,0,.1)"></div>
<div class="t" style="left:796px;top:223.8px;font-size:8.8px;color:#3c4043">No recolour</div>
<div class="a" style="left:943.5px;top:216px;width:5px;height:352px;background:#dadce0;border-radius:2.5px"></div>
<svg width="0" height="0" style="position:absolute"><defs><linearGradient id="tg" x1="0" y1="0" x2="0" y2="1"><stop offset="0" stop-color="#fff" stop-opacity="0.14"/><stop offset="0.55" stop-color="#fff" stop-opacity="0"/><stop offset="1" stop-color="#000" stop-opacity="0.06"/></linearGradient></defs></svg>
<svg style="left:798px;top:249px;overflow:hidden;border-radius:2px" width="36" height="36" viewBox="0 0 36 36">
<rect width="36" height="36" fill="#a9abae"/>
<rect width="36" height="36" fill="url(#tg)"/>
<rect y="22" width="36" height="14" fill="#8f9194" opacity="0.15"/>
<path d="M21.5 17Q23 9 30 8.5Q35 8.3 36 9V17Z" fill="#8f9194" opacity="0.6"/>
<path d="M20 25.5L26 18H36V25.5Z" fill="#e2e3e5"/>
<ellipse cx="33" cy="22" rx="3.6" ry="2.3" fill="none" stroke="#8f9194" stroke-width="0.8" opacity="0.55"/>
<path d="M11.5 24.2H21" stroke="#e2e3e5" stroke-width="1.4"/>
<rect x="19" y="25.5" width="17" height="1.6" fill="#8f9194" opacity="0.6"/>
</svg>
<svg style="left:888.2px;top:249px;overflow:hidden;border-radius:2px" width="36" height="36" viewBox="0 0 36 36">
<rect width="36" height="36" fill="#dcf2e5"/>
<rect width="36" height="36" fill="url(#tg)"/>
<rect y="22" width="36" height="14" fill="#c5e4d1" opacity="0.15"/>
<path d="M21.5 17Q23 9 30 8.5Q35 8.3 36 9V17Z" fill="#c5e4d1" opacity="0.6"/>
<path d="M20 25.5L26 18H36V25.5Z" fill="#f6fcf8"/>
<ellipse cx="33" cy="22" rx="3.6" ry="2.3" fill="none" stroke="#c5e4d1" stroke-width="0.8" opacity="0.55"/>
<path d="M11.5 24.2H21" stroke="#f6fcf8" stroke-width="1.4"/>
<rect x="19" y="25.5" width="17" height="1.6" fill="#c5e4d1" opacity="0.6"/>
</svg>
<svg style="left:798px;top:296px;overflow:hidden;border-radius:2px" width="36" height="36" viewBox="0 0 36 36">
<rect width="36" height="36" fill="#98baf0"/>
<rect width="36" height="36" fill="url(#tg)"/>
<rect y="22" width="36" height="14" fill="#7aa0e0" opacity="0.15"/>
<path d="M21.5 17Q23 9 30 8.5Q35 8.3 36 9V17Z" fill="#7aa0e0" opacity="0.6"/>
<path d="M20 25.5L26 18H36V25.5Z" fill="#d3e2f9"/>
<ellipse cx="33" cy="22" rx="3.6" ry="2.3" fill="none" stroke="#7aa0e0" stroke-width="0.8" opacity="0.55"/>
<path d="M11.5 24.2H21" stroke="#d3e2f9" stroke-width="1.4"/>
<rect x="19" y="25.5" width="17" height="1.6" fill="#7aa0e0" opacity="0.6"/>
</svg>
<svg style="left:843.3px;top:296px;overflow:hidden;border-radius:2px" width="36" height="36" viewBox="0 0 36 36">
<rect width="36" height="36" fill="#fceca8"/>
<rect width="36" height="36" fill="url(#tg)"/>
<rect y="22" width="36" height="14" fill="#e8d680" opacity="0.15"/>
<path d="M21.5 17Q23 9 30 8.5Q35 8.3 36 9V17Z" fill="#e8d680" opacity="0.6"/>
<path d="M20 25.5L26 18H36V25.5Z" fill="#fff8dc"/>
<ellipse cx="33" cy="22" rx="3.6" ry="2.3" fill="none" stroke="#e8d680" stroke-width="0.8" opacity="0.55"/>
<path d="M11.5 24.2H21" stroke="#fff8dc" stroke-width="1.4"/>
<rect x="19" y="25.5" width="17" height="1.6" fill="#e8d680" opacity="0.6"/>
</svg>
<svg style="left:888.2px;top:296px;overflow:hidden;border-radius:2px" width="36" height="36" viewBox="0 0 36 36">
<rect width="36" height="36" fill="#babdc6"/>
<rect width="36" height="36" fill="url(#tg)"/>
<rect y="22" width="36" height="14" fill="#a2a5ae" opacity="0.15"/>
<path d="M21.5 17Q23 9 30 8.5Q35 8.3 36 9V17Z" fill="#a2a5ae" opacity="0.6"/>
<path d="M20 25.5L26 18H36V25.5Z" fill="#e3e4e8"/>
<ellipse cx="33" cy="22" rx="3.6" ry="2.3" fill="none" stroke="#a2a5ae" stroke-width="0.8" opacity="0.55"/>
<path d="M11.5 24.2H21" stroke="#e3e4e8" stroke-width="1.4"/>
<rect x="19" y="25.5" width="17" height="1.6" fill="#a2a5ae" opacity="0.6"/>
</svg>
<svg style="left:798px;top:343px;overflow:hidden;border-radius:2px" width="36" height="36" viewBox="0 0 36 36">
<rect width="36" height="36" fill="#fcfbf9"/>
<rect width="36" height="36" fill="url(#tg)"/>
<rect y="22" width="36" height="14" fill="#eceae6" opacity="0.15"/>
<path d="M21.5 17Q23 9 30 8.5Q35 8.3 36 9V17Z" fill="#eceae6" opacity="0.6"/>
<path d="M20 25.5L26 18H36V25.5Z" fill="#ffffff"/>
<ellipse cx="33" cy="22" rx="3.6" ry="2.3" fill="none" stroke="#eceae6" stroke-width="0.8" opacity="0.55"/>
<path d="M11.5 24.2H21" stroke="#ffffff" stroke-width="1.4"/>
<rect x="19" y="25.5" width="17" height="1.6" fill="#eceae6" opacity="0.6"/>
</svg>
<svg style="left:843.3px;top:343px;overflow:hidden;border-radius:2px" width="36" height="36" viewBox="0 0 36 36">
<rect width="36" height="36" fill="#dde4f6"/>
<rect width="36" height="36" fill="url(#tg)"/>
<rect y="22" width="36" height="14" fill="#c3cdec" opacity="0.15"/>
<path d="M21.5 17Q23 9 30 8.5Q35 8.3 36 9V17Z" fill="#c3cdec" opacity="0.6"/>
<path d="M20 25.5L26 18H36V25.5Z" fill="#f3f6fc"/>
<ellipse cx="33" cy="22" rx="3.6" ry="2.3" fill="none" stroke="#c3cdec" stroke-width="0.8" opacity="0.55"/>
<path d="M11.5 24.2H21" stroke="#f3f6fc" stroke-width="1.4"/>
<rect x="19" y="25.5" width="17" height="1.6" fill="#c3cdec" opacity="0.6"/>
</svg>
<svg style="left:888.2px;top:343px;overflow:hidden;border-radius:2px" width="36" height="36" viewBox="0 0 36 36">
<rect width="36" height="36" fill="#f7bea7"/>
<rect width="36" height="36" fill="url(#tg)"/>
<rect y="22" width="36" height="14" fill="#e89f86" opacity="0.15"/>
<path d="M21.5 17Q23 9 30 8.5Q35 8.3 36 9V17Z" fill="#e89f86" opacity="0.6"/>
<path d="M20 25.5L26 18H36V25.5Z" fill="#fde4d8"/>
<ellipse cx="33" cy="22" rx="3.6" ry="2.3" fill="none" stroke="#e89f86" stroke-width="0.8" opacity="0.55"/>
<path d="M11.5 24.2H21" stroke="#fde4d8" stroke-width="1.4"/>
<rect x="19" y="25.5" width="17" height="1.6" fill="#e89f86" opacity="0.6"/>
</svg>
<svg style="left:798px;top:390px;overflow:hidden;border-radius:2px" width="36" height="36" viewBox="0 0 36 36">
<rect width="36" height="36" fill="#3b3e44"/>
<rect width="36" height="36" fill="url(#tg)"/>
<rect y="22" width="36" height="14" fill="#1d1f23" opacity="0.15"/>
<path d="M21.5 17Q23 9 30 8.5Q35 8.3 36 9V17Z" fill="#1d1f23" opacity="0.6"/>
<path d="M20 25.5L26 18H36V25.5Z" fill="#b5b8bd"/>
<ellipse cx="33" cy="22" rx="3.6" ry="2.3" fill="none" stroke="#1d1f23" stroke-width="0.8" opacity="0.55"/>
<path d="M11.5 24.2H21" stroke="#b5b8bd" stroke-width="1.4"/>
<rect x="19" y="25.5" width="17" height="1.6" fill="#1d1f23" opacity="0.6"/>
</svg>
<svg style="left:843.3px;top:390px;overflow:hidden;border-radius:2px" width="36" height="36" viewBox="0 0 36 36">
<rect width="36" height="36" fill="#b3b4b5"/>
<rect width="36" height="36" fill="url(#tg)"/>
<rect y="22" width="36" height="14" fill="#8f9091" opacity="0.15"/>
<path d="M21.5 17Q23 9 30 8.5Q35 8.3 36 9V17Z" fill="#8f9091" opacity="0.6"/>
<path d="M20 25.5L26 18H36V25.5Z" fill="#e3e3e4"/>
<ellipse cx="33" cy="22" rx="3.6" ry="2.3" fill="none" stroke="#8f9091" stroke-width="0.8" opacity="0.55"/>
<path d="M11.5 24.2H21" stroke="#e3e3e4" stroke-width="1.4"/>
<rect x="19" y="25.5" width="17" height="1.6" fill="#8f9091" opacity="0.6"/>
</svg>
<svg style="left:888.2px;top:390px;overflow:hidden;border-radius:2px" width="36" height="36" viewBox="0 0 36 36">
<rect width="36" height="36" fill="#68b88c"/>
<rect width="36" height="36" fill="url(#tg)"/>
<rect y="22" width="36" height="14" fill="#3f8f63" opacity="0.15"/>
<path d="M21.5 17Q23 9 30 8.5Q35 8.3 36 9V17Z" fill="#3f8f63" opacity="0.6"/>
<path d="M20 25.5L26 18H36V25.5Z" fill="#b9e2ca"/>
<ellipse cx="33" cy="22" rx="3.6" ry="2.3" fill="none" stroke="#3f8f63" stroke-width="0.8" opacity="0.55"/>
<path d="M11.5 24.2H21" stroke="#b9e2ca" stroke-width="1.4"/>
<rect x="19" y="25.5" width="17" height="1.6" fill="#3f8f63" opacity="0.6"/>
</svg>
<div class="a" style="left:887.2px;top:389px;width:38px;height:38px;border:1.3px solid #6f9ef2;border-radius:2.5px"></div>
<svg style="left:798px;top:437px;overflow:hidden;border-radius:2px" width="36" height="36" viewBox="0 0 36 36">
<rect width="36" height="36" fill="#2a559f"/>
<rect width="36" height="36" fill="url(#tg)"/>
<rect y="22" width="36" height="14" fill="#143a80" opacity="0.15"/>
<path d="M21.5 17Q23 9 30 8.5Q35 8.3 36 9V17Z" fill="#143a80" opacity="0.6"/>
<path d="M20 25.5L26 18H36V25.5Z" fill="#a9bde0"/>
<ellipse cx="33" cy="22" rx="3.6" ry="2.3" fill="none" stroke="#143a80" stroke-width="0.8" opacity="0.55"/>
<path d="M11.5 24.2H21" stroke="#a9bde0" stroke-width="1.4"/>
<rect x="19" y="25.5" width="17" height="1.6" fill="#143a80" opacity="0.6"/>
</svg>
<svg style="left:843.3px;top:437px;overflow:hidden;border-radius:2px" width="36" height="36" viewBox="0 0 36 36">
<rect width="36" height="36" fill="#ccb231"/>
<rect width="36" height="36" fill="url(#tg)"/>
<rect y="22" width="36" height="14" fill="#a28a22" opacity="0.15"/>
<path d="M21.5 17Q23 9 30 8.5Q35 8.3 36 9V17Z" fill="#a28a22" opacity="0.6"/>
<path d="M20 25.5L26 18H36V25.5Z" fill="#efe3a5"/>
<ellipse cx="33" cy="22" rx="3.6" ry="2.3" fill="none" stroke="#a28a22" stroke-width="0.8" opacity="0.55"/>
<path d="M11.5 24.2H21" stroke="#efe3a5" stroke-width="1.4"/>
<rect x="19" y="25.5" width="17" height="1.6" fill="#a28a22" opacity="0.6"/>
</svg>
<svg style="left:888.2px;top:437px;overflow:hidden;border-radius:2px" width="36" height="36" viewBox="0 0 36 36">
<rect width="36" height="36" fill="#5b5e65"/>
<rect width="36" height="36" fill="url(#tg)"/>
<rect y="22" width="36" height="14" fill="#3f4147" opacity="0.15"/>
<path d="M21.5 17Q23 9 30 8.5Q35 8.3 36 9V17Z" fill="#3f4147" opacity="0.6"/>
<path d="M20 25.5L26 18H36V25.5Z" fill="#b6b8bc"/>
<ellipse cx="33" cy="22" rx="3.6" ry="2.3" fill="none" stroke="#3f4147" stroke-width="0.8" opacity="0.55"/>
<path d="M11.5 24.2H21" stroke="#b6b8bc" stroke-width="1.4"/>
<rect x="19" y="25.5" width="17" height="1.6" fill="#3f4147" opacity="0.6"/>
</svg>
<svg style="left:798px;top:484px;overflow:hidden;border-radius:2px" width="36" height="36" viewBox="0 0 36 36">
<rect width="36" height="36" fill="#e9bd7f"/>
<rect width="36" height="36" fill="url(#tg)"/>
<rect y="22" width="36" height="14" fill="#c9985a" opacity="0.15"/>
<path d="M21.5 17Q23 9 30 8.5Q35 8.3 36 9V17Z" fill="#c9985a" opacity="0.6"/>
<path d="M20 25.5L26 18H36V25.5Z" fill="#f9e6ca"/>
<ellipse cx="33" cy="22" rx="3.6" ry="2.3" fill="none" stroke="#c9985a" stroke-width="0.8" opacity="0.55"/>
<path d="M11.5 24.2H21" stroke="#f9e6ca" stroke-width="1.4"/>
<rect x="19" y="25.5" width="17" height="1.6" fill="#c9985a" opacity="0.6"/>
</svg>
<svg style="left:843.3px;top:484px;overflow:hidden;border-radius:2px" width="36" height="36" viewBox="0 0 36 36">
<rect width="36" height="36" fill="#6382ca"/>
<rect width="36" height="36" fill="url(#tg)"/>
<rect y="22" width="36" height="14" fill="#3f5eb0" opacity="0.15"/>
<path d="M21.5 17Q23 9 30 8.5Q35 8.3 36 9V17Z" fill="#3f5eb0" opacity="0.6"/>
<path d="M20 25.5L26 18H36V25.5Z" fill="#bccaee"/>
<ellipse cx="33" cy="22" rx="3.6" ry="2.3" fill="none" stroke="#3f5eb0" stroke-width="0.8" opacity="0.55"/>
<path d="M11.5 24.2H21" stroke="#bccaee" stroke-width="1.4"/>
<rect x="19" y="25.5" width="17" height="1.6" fill="#3f5eb0" opacity="0.6"/>
</svg>
<svg style="left:888.2px;top:484px;overflow:hidden;border-radius:2px" width="36" height="36" viewBox="0 0 36 36">
<rect width="36" height="36" fill="#dc5e2d"/>
<rect width="36" height="36" fill="url(#tg)"/>
<rect y="22" width="36" height="14" fill="#b5421b" opacity="0.15"/>
<path d="M21.5 17Q23 9 30 8.5Q35 8.3 36 9V17Z" fill="#b5421b" opacity="0.6"/>
<path d="M20 25.5L26 18H36V25.5Z" fill="#f5b89c"/>
<ellipse cx="33" cy="22" rx="3.6" ry="2.3" fill="none" stroke="#b5421b" stroke-width="0.8" opacity="0.55"/>
<path d="M11.5 24.2H21" stroke="#f5b89c" stroke-width="1.4"/>
<rect x="19" y="25.5" width="17" height="1.6" fill="#b5421b" opacity="0.6"/>
</svg>
<svg style="left:798px;top:531px;overflow:hidden;border-radius:2px" width="36" height="36" viewBox="0 0 36 36">
<rect width="36" height="36" fill="#bcbdbd"/>
<rect width="36" height="36" fill="url(#tg)"/>
<rect y="22" width="36" height="14" fill="#97989a" opacity="0.15"/>
<path d="M21.5 17Q23 9 30 8.5Q35 8.3 36 9V17Z" fill="#97989a" opacity="0.6"/>
<path d="M20 25.5L26 18H36V25.5Z" fill="#e6e6e7"/>
<ellipse cx="33" cy="22" rx="3.6" ry="2.3" fill="none" stroke="#97989a" stroke-width="0.8" opacity="0.55"/>
<path d="M11.5 24.2H21" stroke="#e6e6e7" stroke-width="1.4"/>
<rect x="19" y="25.5" width="17" height="1.6" fill="#97989a" opacity="0.6"/>
</svg>
<svg style="left:843.3px;top:531px;overflow:hidden;border-radius:2px" width="36" height="36" viewBox="0 0 36 36">
<rect width="36" height="36" fill="#444547"/>
<rect width="36" height="36" fill="url(#tg)"/>
<rect y="22" width="36" height="14" fill="#26272a" opacity="0.15"/>
<path d="M21.5 17Q23 9 30 8.5Q35 8.3 36 9V17Z" fill="#26272a" opacity="0.6"/>
<path d="M20 25.5L26 18H36V25.5Z" fill="#9a9b9d"/>
<ellipse cx="33" cy="22" rx="3.6" ry="2.3" fill="none" stroke="#26272a" stroke-width="0.8" opacity="0.55"/>
<path d="M11.5 24.2H21" stroke="#9a9b9d" stroke-width="1.4"/>
<rect x="19" y="25.5" width="17" height="1.6" fill="#26272a" opacity="0.6"/>
</svg>
<svg style="left:888.2px;top:531px;overflow:hidden;border-radius:2px" width="36" height="36" viewBox="0 0 36 36">
<rect width="36" height="36" fill="#a98363"/>
<rect width="36" height="36" fill="url(#tg)"/>
<rect y="22" width="36" height="14" fill="#86603f" opacity="0.15"/>
<path d="M21.5 17Q23 9 30 8.5Q35 8.3 36 9V17Z" fill="#86603f" opacity="0.6"/>
<path d="M20 25.5L26 18H36V25.5Z" fill="#dfcbb9"/>
<ellipse cx="33" cy="22" rx="3.6" ry="2.3" fill="none" stroke="#86603f" stroke-width="0.8" opacity="0.55"/>
<path d="M11.5 24.2H21" stroke="#dfcbb9" stroke-width="1.4"/>
<rect x="19" y="25.5" width="17" height="1.6" fill="#86603f" opacity="0.6"/>
</svg>

<!-- ============ RIGHT SIDEBAR ============ -->
<div class="a" style="left:961px;top:40px;width:1px;height:536px;background:#e3e5e8"></div>
<svg style="left:974.5px;top:52.5px" width="10" height="10" viewBox="0 0 10 10"><rect x="0" y="0" width="10" height="10" rx="0.8" fill="#4285f4"/><rect x="0" y="0" width="10" height="2.2" fill="#3367d6"/><text x="5" y="8.3" font-family="Liberation Sans" font-size="5" fill="#fff" text-anchor="middle">31</text></svg>
<svg style="left:974.5px;top:86.5px" width="10" height="10" viewBox="0 0 10 10"><path d="M1 0H9A1 1 0 0 1 10 1V7L7 10H1A1 1 0 0 1 0 9V1A1 1 0 0 1 1 0Z" fill="#fbbc04"/><path d="M7 10V7H10Z" fill="#e37400"/><circle cx="5" cy="4.5" r="2" fill="none" stroke="#fff" stroke-width="0.8"/><path d="M4.2 6.6H5.8V7.6H4.2Z" fill="#fff"/></svg>
<svg style="left:974px;top:121px" width="11" height="11" viewBox="0 0 11 11"><circle cx="5.5" cy="5.5" r="5.5" fill="#4285f4"/><path d="M2.8 6.6L4.2 7.6L8.4 3.4" fill="none" stroke="#fff" stroke-width="1.4"/><circle cx="2.8" cy="5.8" r="0.9" fill="#fbbc04"/></svg>
<svg style="left:977px;top:557px" width="4" height="6" viewBox="0 0 4 6"><path d="M0.6 0.5L3.2 3L0.6 5.5" fill="none" stroke="#5f6368" stroke-width="1.1"/></svg>

</body></html>
